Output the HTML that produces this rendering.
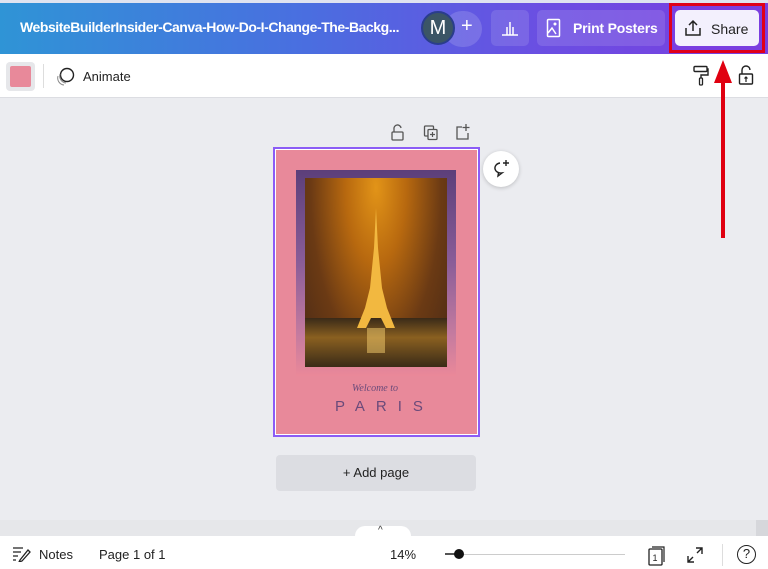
<!DOCTYPE html>
<html><head><style>
*{margin:0;padding:0;box-sizing:border-box}
body{width:768px;height:569px;overflow:hidden;font-family:"Liberation Sans",sans-serif;background:#ebecf0;position:relative}
.abs{position:absolute}
</style></head><body>
<div class="abs" style="left:0;top:0;width:768px;height:54px;background:linear-gradient(90deg,#2f94d6 0%,#4a6ee0 40%,#6a4fe2 70%,#7a3ee0 100%);border-top:3px solid #dfe3f0"></div>
<div class="abs" style="left:20px;top:19px;color:#fff;font-size:14px;font-weight:bold;letter-spacing:-0.45px">WebsiteBuilderInsider-Canva-How-Do-I-Change-The-Backg...</div>
<div class="abs" style="left:444px;top:11px;width:38px;height:36px;border-radius:18px;background:rgba(255,255,255,0.15)"></div>
<div class="abs" style="left:461px;top:15px;color:#fff;font-size:20px">+</div>
<div class="abs" style="left:421px;top:11px;width:34px;height:34px;border-radius:50%;background:#3b5566;border:2px solid #2a3d8c;color:#fff;font-size:20px;text-align:center;line-height:30px">M</div>
<div class="abs" style="left:491px;top:10px;width:38px;height:36px;border-radius:5px;background:rgba(255,255,255,0.12)"></div>
<svg class="abs" style="left:500px;top:18px" width="20" height="20"><path d="M2 17H18M7 17V9M10 17V4M13 17V9" stroke="#fff" stroke-width="1.5" fill="none"/></svg>
<div class="abs" style="left:537px;top:10px;width:128px;height:36px;border-radius:5px;background:rgba(255,255,255,0.12)"></div>
<svg class="abs" style="left:546px;top:18px" width="16" height="20"><rect x="1.5" y="1.5" width="12" height="17" rx="1" stroke="#fff" stroke-width="1.5" fill="none"/><circle cx="9" cy="6" r="1.5" fill="#fff"/><path d="M2 15L6 10L10 16" stroke="#fff" stroke-width="1.5" fill="none"/></svg>
<div class="abs" style="left:573px;top:20px;color:#fff;font-size:14px;font-weight:bold;letter-spacing:-0.2px">Print Posters</div>
<div class="abs" style="left:669px;top:3px;width:96px;height:50px;border:3px solid #e0001a;background:#7a3ee0"></div>
<div class="abs" style="left:675px;top:10px;width:84px;height:36px;border-radius:5px;background:#f3f0fd"></div>
<svg class="abs" style="left:683px;top:18px" width="20" height="20"><path d="M10 13V3M6 7L10 3L14 7M3 10V17H17V10" stroke="#222" stroke-width="1.5" fill="none"/></svg>
<div class="abs" style="left:711px;top:21px;color:#222;font-size:14px">Share</div>

<div class="abs" style="left:0;top:54px;width:768px;height:44px;background:#fff;border-bottom:1px solid #dcdde2"></div>
<div class="abs" style="left:6px;top:62px;width:29px;height:29px;border-radius:4px;background:#e6e7ea"></div>
<div class="abs" style="left:10px;top:66px;width:21px;height:21px;border-radius:2px;background:#e8899a"></div>
<div class="abs" style="left:43px;top:64px;width:1px;height:24px;background:#ddd"></div>
<svg class="abs" style="left:55px;top:66px" width="22" height="20"><circle cx="12" cy="9" r="6.5" stroke="#222" stroke-width="1.4" fill="none"/><path d="M5 8A7 7 0 0 0 11 17M3 10A7 7 0 0 0 9 19" stroke="#888" stroke-width="1" fill="none"/></svg>
<div class="abs" style="left:83px;top:69px;font-size:13px;color:#222">Animate</div>
<svg class="abs" style="left:692px;top:65px" width="18" height="22"><rect x="2" y="1.5" width="13" height="5" rx="1" stroke="#222" stroke-width="1.4" fill="none"/><path d="M15 4H16V10H9V13" stroke="#222" stroke-width="1.4" fill="none"/><rect x="7.5" y="13" width="3" height="7" rx="1" stroke="#222" stroke-width="1.3" fill="none"/></svg>
<svg class="abs" style="left:737px;top:64px" width="18" height="22"><path d="M5 10V6A4 4 0 0 1 13 6" stroke="#222" stroke-width="1.4" fill="none"/><rect x="2.5" y="10" width="13" height="10" rx="1" stroke="#222" stroke-width="1.4" fill="none"/><path d="M9 18V13M7.5 14.5L9 13L10.5 14.5" stroke="#222" stroke-width="1.2" fill="none"/></svg>

<div class="abs" style="left:756px;top:98px;width:12px;height:422px;background:#ebecf0"></div>
<div class="abs" style="left:0;top:520px;width:768px;height:16px;background:#e6e7ea"></div>
<div class="abs" style="left:756px;top:520px;width:12px;height:16px;background:#d6d7db"></div>
<div class="abs" style="left:355px;top:526px;width:56px;height:12px;background:#fff;border-radius:10px 10px 0 0"></div>
<div class="abs" style="left:378px;top:525px;font-size:10px;color:#333">^</div>

<svg class="abs" style="left:390px;top:124px" width="16" height="18"><path d="M4 8V5A3.5 3.5 0 0 1 11 4" stroke="#555" stroke-width="1.3" fill="none"/><rect x="2" y="8" width="11" height="8" rx="1" stroke="#555" stroke-width="1.3" fill="none"/></svg>
<svg class="abs" style="left:423px;top:124px" width="16" height="18"><rect x="1.5" y="2" width="9" height="10" rx="1" stroke="#555" stroke-width="1.3" fill="none"/><rect x="5" y="5.5" width="9" height="10" rx="1" stroke="#555" stroke-width="1.3" fill="#ebecf0"/><path d="M9.5 8V13M7 10.5H12" stroke="#555" stroke-width="1.2"/></svg>
<svg class="abs" style="left:455px;top:123px" width="16" height="18"><path d="M7 4H2V16H13V10M11 1V8M7.5 4.5H14.5" stroke="#555" stroke-width="1.3" fill="none"/></svg>
<div class="abs" style="left:483px;top:151px;width:36px;height:36px;border-radius:50%;background:#fff;box-shadow:0 1px 4px rgba(0,0,0,.2)"></div>
<svg class="abs" style="left:490px;top:158px" width="22" height="22"><path d="M10 5A6 5 0 1 0 12 15L8 18L8.5 14.5" stroke="#222" stroke-width="1.4" fill="none"/><path d="M16 2V8M13 5H19" stroke="#222" stroke-width="1.4"/></svg>

<div class="abs" style="left:273px;top:147px;width:207px;height:290px;border:2px solid #8b5cf6;background:#fff;padding:1px"><div style="width:100%;height:100%;background:#e8899a"></div></div>
<div class="abs" style="left:296px;top:170px;width:160px;height:206px;background:linear-gradient(180deg,#5c3f7a 0%,#8a5d98 45%,#c57b9f 80%,#ea8899 100%)"></div>
<div class="abs" style="left:305px;top:178px;width:142px;height:189px;background:radial-gradient(ellipse at 50% 5%,#e29418 0%,#b8690f 30%,#6b3a14 65%,#4a2a16 100%)"></div>
<div class="abs" style="left:305px;top:318px;width:142px;height:49px;background:linear-gradient(180deg,#3a2a18,#8a6020 40%,#3a2b18 100%)"></div>
<svg class="abs" style="left:305px;top:178px" width="142" height="189"><path d="M71 30L69 70L65 110L60 130L52 150H61L66 140H76L81 150H90L82 130L77 110L73 70Z" fill="#f2b840"/><path d="M62 150H80V175H62Z" fill="#f8d070" opacity=".5"/></svg>
<div class="abs" style="left:352px;top:383px;font-family:'Liberation Serif',serif;font-style:italic;font-size:10px;color:#6a4a7a">Welcome to</div>
<div class="abs" style="left:335px;top:398px;font-size:15px;letter-spacing:11px;color:#6a4a7a;font-weight:300">PARIS</div>

<div class="abs" style="left:276px;top:455px;width:200px;height:36px;border-radius:4px;background:#dcdde2;text-align:center;line-height:36px;font-size:13px;color:#222">+ Add page</div>

<svg class="abs" style="left:710px;top:55px" width="30" height="190"><path d="M13 5L4 28H11V183H15V28H22Z" fill="#e00010"/></svg>

<div class="abs" style="left:0;top:536px;width:768px;height:33px;background:#fff"></div>
<svg class="abs" style="left:12px;top:546px" width="20" height="16"><path d="M1 2H11M1 6H9M1 10H6M1 14H4M8 14L16 4L18 6L10 15L7 16Z" stroke="#222" stroke-width="1.3" fill="none"/></svg>
<div class="abs" style="left:39px;top:547px;font-size:13px;color:#222">Notes</div>
<div class="abs" style="left:99px;top:547px;font-size:13px;color:#222">Page 1 of 1</div>
<div class="abs" style="left:390px;top:547px;font-size:13px;color:#222">14%</div>
<div class="abs" style="left:445px;top:554px;width:180px;height:1px;background:#ccc"></div>
<div class="abs" style="left:445px;top:553px;width:12px;height:2px;background:#555"></div>
<div class="abs" style="left:454px;top:549px;width:10px;height:10px;border-radius:50%;background:#111"></div>
<svg class="abs" style="left:647px;top:544px" width="22" height="22"><rect x="2" y="5" width="13" height="16" rx="1" stroke="#222" stroke-width="1.3" fill="none"/><path d="M5 3H17V18" stroke="#222" stroke-width="1.2" fill="none"/><text x="5.5" y="17" font-size="9" font-family="Liberation Sans" fill="#222">1</text></svg>
<svg class="abs" style="left:686px;top:546px" width="18" height="18"><path d="M10 2H16V8M16 2L11 7M8 16H2V10M2 16L7 11" stroke="#222" stroke-width="1.4" fill="none"/></svg>
<div class="abs" style="left:722px;top:544px;width:1px;height:22px;background:#ddd"></div>
<div class="abs" style="left:737px;top:545px;width:19px;height:19px;border-radius:50%;border:1.5px solid #222;text-align:center;font-size:13px;line-height:16px;color:#222">?</div>
</body></html>
